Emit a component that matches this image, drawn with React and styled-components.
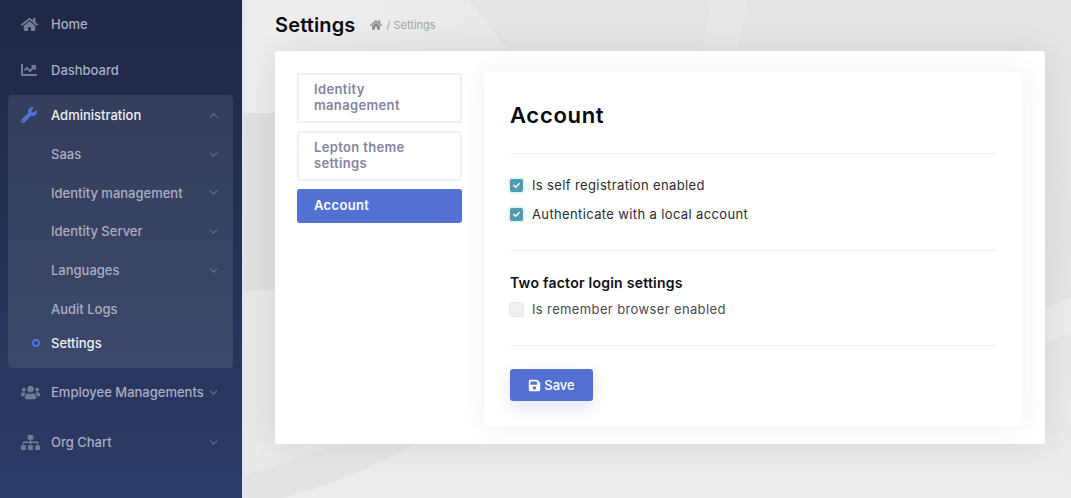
import React from "react";
import styled, { createGlobalStyle } from "styled-components";
import {
  FaHome,
  FaChartLine,
  FaWrench,
  FaUsers,
  FaSitemap,
  FaSave,
  FaCheck,
} from "react-icons/fa";
import { ChevronDown, ChevronUp } from "lucide-react";

const GlobalStyle = createGlobalStyle`
  * { box-sizing: border-box; }
  html, body { margin: 0; height: 100%; }
  body {
    font-family: "Inter", "Liberation Sans", sans-serif;
    overflow: hidden;
  }
`;

const subItems = [
  { label: "Saas", arrow: true },
  { label: "Identity management", arrow: true },
  { label: "Identity Server", arrow: true },
  { label: "Languages", arrow: true },
  { label: "Audit Logs" },
];

// faint grey shapes of the page background
const Backdrop = () => (
  <BackdropSvg viewBox="0 0 829 498">
    <defs>
      <linearGradient id="sheen" x1="0" y1="0" x2="1" y2="0.3">
        <stop offset="0" stopColor="#eeeeef" />
        <stop offset="1" stopColor="#e8e8e9" />
      </linearGradient>
      <linearGradient id="edge" x1="0" y1="0" x2="1" y2="0">
        <stop offset="0" stopColor="#dde3ef" />
        <stop offset="1" stopColor="#dde3ef" stopOpacity="0" />
      </linearGradient>
    </defs>
    <path d="M0 0H227L290 80V113H0Z" fill="url(#sheen)" />
    <path d="M470 0H505L493 60H458Z" fill="#e8e8e9" />
    <rect x="0" y="113" width="40" height="177" fill="#dfdfe0" />
    <rect x="0" y="290" width="40" height="208" fill="#e8e8e9" />
    <path d="M40 444H90Q50 462 10 472L0 476V444Z" fill="#e9e9ea" />
    <path d="M90 445Q50 462 10 472L0 476V498H40Q110 480 178 442Z" fill="#e4e4e5" />
    <path d="M803 308L829 297V333L803 343Z" fill="#ececed" />
    <rect x="0" y="0" width="6" height="498" fill="url(#edge)" />
  </BackdropSvg>
);

export default function App() {
  return (
    <Page>
      <GlobalStyle />
      <Sidebar>
        <MenuRow $height={46}>
          <MenuIcon><FaHome size={17} /></MenuIcon>
          <MenuLabel>Home</MenuLabel>
        </MenuRow>
        <MenuRow $height={46}>
          <MenuIcon><FaChartLine size={16} /></MenuIcon>
          <MenuLabel>Dashboard</MenuLabel>
        </MenuRow>
        <Group>
          <GroupHead>
            <MenuIcon $active><FaWrench size={16} /></MenuIcon>
            <MenuLabel $active>Administration</MenuLabel>
            <Arrow $active><ChevronUp size={13} /></Arrow>
          </GroupHead>
          {subItems.map((item) => (
            <SubRow key={item.label}>
              <MenuLabel>{item.label}</MenuLabel>
              {item.arrow && <Arrow><ChevronDown size={13} /></Arrow>}
            </SubRow>
          ))}
          <CurrentRow>
            <Dot />
            <MenuLabel $active>Settings</MenuLabel>
          </CurrentRow>
        </Group>
        <MenuRow $height={48}>
          <MenuIcon><FaUsers size={19} /></MenuIcon>
          <MenuLabel>Employee Managements</MenuLabel>
          <Arrow><ChevronDown size={13} /></Arrow>
        </MenuRow>
        <MenuRow $height={52}>
          <MenuIcon><FaSitemap size={19} /></MenuIcon>
          <MenuLabel>Org Chart</MenuLabel>
          <Arrow><ChevronDown size={13} /></Arrow>
        </MenuRow>
      </Sidebar>

      <Main>
        <Backdrop />
        <TitleBar>
          <Title>Settings</Title>
          <Crumbs>
            <FaHome size={12} />
            <span>/ Settings</span>
          </Crumbs>
        </TitleBar>
        <Card>
          <TabList>
            <Tab>Identity management</Tab>
            <Tab>Lepton theme settings</Tab>
            <Tab $active>Account</Tab>
          </TabList>
          <Pane>
            <PaneTitle>Account</PaneTitle>
            <Rule />
            <CheckList>
              <CheckRow>
                <CheckBox $checked><FaCheck size={7} /></CheckBox>
                Is self registration enabled
              </CheckRow>
              <CheckRow>
                <CheckBox $checked><FaCheck size={7} /></CheckBox>
                Authenticate with a local account
              </CheckRow>
            </CheckList>
            <Rule />
            <SectionTitle>Two factor login settings</SectionTitle>
            <PlainCheckRow>
              <CheckBox />
              Is remember browser enabled
            </PlainCheckRow>
            <Rule />
            <SaveButton>
              <FaSave size={13} />
              Save
            </SaveButton>
          </Pane>
        </Card>
      </Main>
    </Page>
  );
}

const Page = styled.div`
  display: flex;
  width: 1071px;
  height: 498px;
  overflow: hidden;
`;

const Sidebar = styled.aside`
  flex: 0 0 242px;
  padding: 1px 9px 0 8px;
  background: linear-gradient(180deg, #1f2746 0%, #2c3b66 100%);
`;

const MenuRow = styled.div`
  display: flex;
  align-items: center;
  height: ${(p) => p.$height}px;
  padding: 0 13px 0 13px;
`;

const MenuIcon = styled.span`
  display: flex;
  align-items: center;
  flex: 0 0 30px;
  color: ${(p) => (p.$active ? "#5472d8" : "#737b95")};
`;

const MenuLabel = styled.span`
  flex: 1;
  font-size: 13px;
  font-weight: 500;
  white-space: nowrap;
  color: ${(p) => (p.$active ? "#eef0f6" : "#a9aec2")};
`;

const Arrow = styled.span`
  display: flex;
  align-items: center;
  color: ${(p) => (p.$active ? "#5b6fb4" : "#66708f")};
`;

const Group = styled.div`
  margin-top: 2px;
  height: 273px;
  border-radius: 4px;
  background: rgba(255, 255, 255, 0.09);
`;

const GroupHead = styled(MenuRow)`
  height: 40px;
`;

const SubRow = styled.div`
  display: flex;
  align-items: center;
  height: 38.6px;
  padding: 0 13px 0 43px;
`;

const CurrentRow = styled(SubRow)`
  position: relative;
  height: 30px;
`;

const Dot = styled.span`
  position: absolute;
  left: 24px;
  top: 11px;
  width: 8px;
  height: 8px;
  border: 2px solid #5472d8;
  border-radius: 50%;
`;

const Main = styled.main`
  position: relative;
  flex: 1;
  padding: 0 26px 0 33px;
  overflow: hidden;
  background: linear-gradient(180deg, #e5e5e6 0%, #e3e3e5 50%, #ececed 100%);
`;

const BackdropSvg = styled.svg`
  position: absolute;
  left: 0;
  top: 0;
  width: 829px;
  height: 498px;
`;

const TitleBar = styled.header`
  position: relative;
  display: flex;
  align-items: center;
  height: 51px;
  padding-bottom: 2px;
`;

const Title = styled.h1`
  margin: 0 14px 0 0;
  font-size: 20px;
  line-height: 1;
  font-weight: 600;
  letter-spacing: 0.15px;
  color: #0c0c10;
`;

const Crumbs = styled.div`
  display: flex;
  align-items: center;
  gap: 5px;
  font-size: 11px;
  color: #a4a4a8;

  svg {
    color: #8b8b90;
  }
`;

const Card = styled.section`
  position: relative;
  display: flex;
  gap: 22px;
  height: 393px;
  padding: 21px 22px;
  border-radius: 3px;
  background: #fff;
  box-shadow: 0 0 30px rgba(40, 40, 60, 0.09);
`;

const TabList = styled.nav`
  display: flex;
  flex-direction: column;
  gap: 8px;
  flex: 0 0 165px;
  padding-top: 1px;
`;

const Tab = styled.a`
  display: block;
  padding: ${(p) => (p.$active ? "8px 17px 10px" : "6px 15px 8px")};
  border: ${(p) => (p.$active ? "0" : "2px solid #f1f1f3")};
  border-radius: 3px;
  font-size: 13px;
  line-height: 16px;
  font-weight: 600;
  letter-spacing: 0.35px;
  color: ${(p) => (p.$active ? "#fff" : "#82859c")};
  background: ${(p) => (p.$active ? "#5271d3" : "#fff")};
`;

const Pane = styled.div`
  flex: 1;
  height: 354px;
  padding: 26px;
  background: #fff;
  box-shadow: 0 0 24px rgba(40, 40, 60, 0.08);
`;

const PaneTitle = styled.h2`
  margin: 0;
  height: 55px;
  padding-top: 2px;
  font-size: 22px;
  line-height: 30px;
  font-weight: 600;
  letter-spacing: 0.7px;
  color: #08080c;
`;

const Rule = styled.hr`
  margin: 0;
  border: 0;
  border-top: 1px solid #f2f2f3;
`;

const CheckList = styled.div`
  display: flex;
  flex-direction: column;
  gap: 9px;
  height: 96px;
  padding-top: 21px;
`;

const CheckRow = styled.label`
  display: flex;
  align-items: center;
  gap: 9px;
  height: 20px;
  font-size: 13px;
  letter-spacing: 0.37px;
  color: #2a2a30;
`;

const PlainCheckRow = styled(CheckRow)`
  margin: 7px 0 26px;
  color: #4a4a50;
`;

const CheckBox = styled.span`
  display: flex;
  align-items: center;
  justify-content: center;
  flex: 0 0 13px;
  height: 13px;
  border-radius: 2px;
  color: #fff;
  background: ${(p) => (p.$checked ? "#4f9bb0" : "#f0f0f1")};
  box-shadow: 0 0 0 ${(p) => (p.$checked ? "2px #e6f2f5" : "1px #e9e9ea")};
`;

const SectionTitle = styled.h3`
  margin: 23px 0 0;
  font-size: 14px;
  line-height: 18px;
  font-weight: 600;
  letter-spacing: 0.25px;
  color: #101014;
`;

const SaveButton = styled.button`
  display: flex;
  align-items: center;
  justify-content: center;
  gap: 3px;
  width: 83px;
  height: 32px;
  margin-top: 23px;
  border: 0;
  border-radius: 3px;
  font: 500 13px "Inter", "Liberation Sans", sans-serif;
  color: #fff;
  background: #5271d3;
  box-shadow: 0 6px 16px rgba(82, 113, 211, 0.18);
`;
